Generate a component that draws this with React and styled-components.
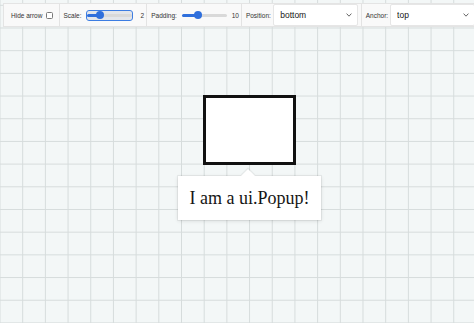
import React, { useState } from "react";
import styled, { createGlobalStyle } from "styled-components";

const Global = createGlobalStyle`
  html, body { margin: 0; padding: 0; height: 100%; }
  body { font-family: "Liberation Sans", Arial, sans-serif; }
  #root { height: 100%; }
`;

const Page = styled.div`
  height: 100%;
  min-height: 100vh;
  overflow: hidden;
  display: flex;
  flex-direction: column;
  background-color: #f3f7f7;
  background-image:
    linear-gradient(to right, #d6dcdc 1px, transparent 1px),
    linear-gradient(to bottom, #d6dcdc 1px, transparent 1px);
  background-size: 22.7px 22.7px;
  background-position: -0.5px 4.8px;
`;

const Toolbar = styled.div`
  flex-shrink: 0;
  display: flex;
  align-items: stretch;
  width: max-content;
  height: 24px;
  margin: 3px 0 0 3px;
  box-sizing: border-box;
  background: #f9f9f9;
  border: 1px solid #e4e4e4;
  border-right: none;
`;

const Group = styled.div`
  display: flex;
  align-items: center;
  padding: 0 ${(p) => p.$pr ?? 2}px 0 ${(p) => p.$pl ?? 4}px;
  & + & {
    border-left: 1px solid #e3e3e3;
  }
`;

const Label = styled.span`
  font-size: 6.5px;
  color: #333;
  white-space: nowrap;
`;

const Check = styled.input.attrs({ type: "checkbox" })`
  appearance: none;
  -webkit-appearance: none;
  width: 7px;
  height: 7px;
  margin: 0 0 0 4px;
  box-sizing: border-box;
  border: 1px solid #7a7a7a;
  border-radius: 1.5px;
  background: #fff;
`;

const Range = styled.input.attrs({ type: "range" })`
  -webkit-appearance: none;
  appearance: none;
  width: 45px;
  height: 9px;
  margin: 0 0 0 ${(p) => p.$ml}px;
  padding: 0;
  border-radius: 2px;
  background: ${(p) => (p.$focused ? "#e3e6eb" : "transparent")};
  outline: ${(p) => (p.$focused ? "1.5px solid #3d7de2" : "none")};
  outline-offset: 0.5px;
  &::-webkit-slider-runnable-track {
    height: 3px;
    border-radius: 2px;
    background: linear-gradient(
      to right,
      #2f6fdc var(--pct),
      #d9d9d9 var(--pct)
    );
  }
  &::-webkit-slider-thumb {
    -webkit-appearance: none;
    appearance: none;
    width: 8px;
    height: 8px;
    border: none;
    border-radius: 50%;
    background: #2f6fdc;
    margin-top: -2.5px;
  }
`;

const Value = styled.span`
  width: 9px;
  margin-left: 3px;
  text-align: right;
  font-size: 6.5px;
  color: #333;
`;

const SelectWrap = styled.div`
  position: relative;
  align-self: stretch;
  margin-left: ${(p) => p.$ml}px;
  display: flex;
`;

const Select = styled.select`
  -webkit-appearance: none;
  appearance: none;
  width: 85px;
  height: 100%;
  box-sizing: border-box;
  margin: 0;
  padding: 0 0 0 6px;
  border: 1px solid #e6e6e6;
  border-radius: 2px;
  background: #fff;
  font-family: "Liberation Sans", Arial, sans-serif;
  font-size: 8.5px;
  color: #151515;
  outline: none;
`;

const Chevron = styled.svg`
  position: absolute;
  right: 6px;
  top: 50%;
  width: 6px;
  height: 4px;
  margin-top: -2px;
  pointer-events: none;
`;

const Stage = styled.div`
  flex: 1;
  display: flex;
  align-items: flex-start;
  padding: 68px 0 0 203px;
`;

const Anchor = styled.div`
  position: relative;
`;

const Target = styled.div`
  width: 93px;
  height: 70px;
  box-sizing: border-box;
  border: 3px solid #111;
  background: #fff;
`;

const Popup = styled.div`
  position: absolute;
  top: calc(100% + 10.5px);
  left: 50%;
  transform: translateX(-50%);
  z-index: 1;
  padding: 12px;
  background: #fff;
  white-space: nowrap;
  font-family: "Liberation Serif", "Times New Roman", serif;
  font-size: 18px;
  line-height: 20px;
  color: #151515;
  box-shadow: 0 0 0 1px rgba(0, 0, 0, 0.05), 0 1px 4px rgba(0, 0, 0, 0.12);
  &::before {
    content: "";
    position: absolute;
    left: 50%;
    top: -5px;
    width: 10px;
    height: 10px;
    margin-left: -6px;
    background: #fff;
    transform: rotate(45deg);
    box-shadow: -1px -1px 1px rgba(0, 0, 0, 0.07);
  }
`;

const PopupText = styled.span`
  position: relative;
`;

function ChevronIcon() {
  return (
    <Chevron viewBox="0 0 6 4">
      <path d="M0.6 0.6 L3 3.2 L5.4 0.6" fill="none" stroke="#555" strokeWidth="0.9" />
    </Chevron>
  );
}

export default function App() {
  const [scale, setScale] = useState(2);
  const [padding, setPadding] = useState(10);
  const [position, setPosition] = useState("bottom");
  const [anchor, setAnchor] = useState("top");
  const pct = (v, min, max) => `${((v - min) / (max - min)) * 100}%`;

  return (
    <Page>
      <Global />
      <Toolbar>
        <Group $pl={7} $pr={6}>
          <Label>Hide arrow</Label>
          <Check />
        </Group>
        <Group $pl={3}>
          <Label>Scale:</Label>
          <Range
            $ml={5.7}
            $focused
            min={1}
            max={5}
            value={scale}
            onChange={(e) => setScale(+e.target.value)}
            style={{ "--pct": pct(scale, 1, 5) }}
          />
          <Value>{scale}</Value>
        </Group>
        <Group>
          <Label>Padding:</Label>
          <Range
            $ml={5}
            min={0}
            max={30}
            value={padding}
            onChange={(e) => setPadding(+e.target.value)}
            style={{ "--pct": pct(padding, 0, 30) }}
          />
          <Value>{padding}</Value>
        </Group>
        <Group $pr={2.5}>
          <Label>Position:</Label>
          <SelectWrap $ml={2.4}>
            <Select value={position} onChange={(e) => setPosition(e.target.value)}>
              <option value="top">top</option>
              <option value="bottom">bottom</option>
              <option value="left">left</option>
              <option value="right">right</option>
            </Select>
            <ChevronIcon />
          </SelectWrap>
        </Group>
        <Group $pr={0}>
          <Label>Anchor:</Label>
          <SelectWrap $ml={2}>
            <Select value={anchor} onChange={(e) => setAnchor(e.target.value)}>
              <option value="top">top</option>
              <option value="center">center</option>
              <option value="bottom">bottom</option>
            </Select>
            <ChevronIcon />
          </SelectWrap>
        </Group>
      </Toolbar>
      <Stage>
        <Anchor>
          <Target />
          <Popup>
            <PopupText>I am a ui.Popup!</PopupText>
          </Popup>
        </Anchor>
      </Stage>
    </Page>
  );
}
